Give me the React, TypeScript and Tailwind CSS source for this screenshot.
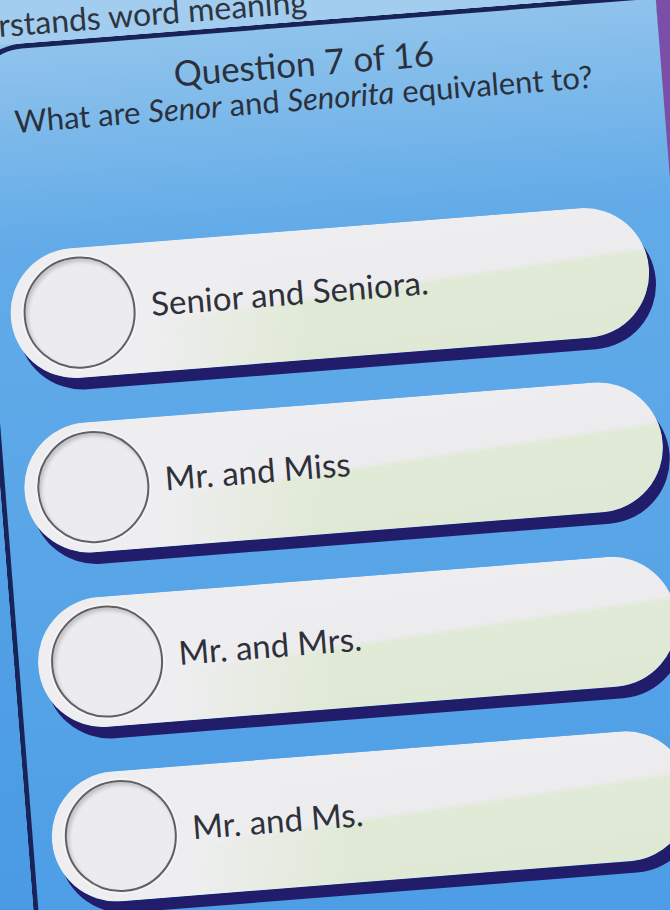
import React from 'react'

const options = ['Senior and Seniora.', 'Mr. and Miss', 'Mr. and Mrs.', 'Mr. and Ms.']

function OptionCard({ label }: { label: string }) {
  return (
    <div className="flex h-[130px] w-[640px] items-center gap-4 rounded-full pl-[13px] shadow-[6px_12px_0_#221d6b] bg-[linear-gradient(to_right,#eeeef0_130px,rgba(238,238,240,0)_300px),linear-gradient(176deg,#efeef1_0%,#ecebee_50%,#e1ead6_53%,#dfe8d4_100%)]">
      <div className="h-[112px] w-[112px] shrink-0 rounded-full border-2 border-[#606064] bg-[#ecebee] shadow-[inset_2px_3px_4px_rgba(0,0,0,0.18),0_0_0_2px_#f4f4f6]" />
      <span className="pb-2 text-[33px] leading-[40px] text-[#2e3139]">{label}</span>
    </div>
  )
}

export default function App() {
  return (
    <div
      className="relative h-[910px] w-[670px] overflow-hidden bg-[linear-gradient(to_bottom,#9ccbee,#5aa6e8_30%,#4a9be4)]"
      style={{ fontFamily: 'Lato, "Open Sans", sans-serif' }}
    >
      <div className="-ml-[40px] -mt-[22px] flex w-[800px] origin-top-left rotate-[-4.5deg] flex-col">
        {/* header strip */}
        <div className="flex h-[70px] items-end bg-[#a2cdef] pb-[3px]">
          <span className="-ml-[36px] whitespace-nowrap text-[32px] leading-[34px] text-[#2e3440]">
            understands word meaning
          </span>
        </div>

        <div className="flex">
          {/* quiz panel */}
          <div className="h-[940px] w-[692px] shrink-0 rounded-tl-[56px] border-l-[5px] border-t-[5px] border-[#1a2358] bg-[linear-gradient(to_bottom,#8fc3ec,#62abe8_200px,#4c9de6)]">
            <div className="w-[658px] pl-[4px] pt-[16px] text-center text-[#2b313c]">
              <p className="text-[35px] leading-[40px]">Question 7 of 16</p>
              <p className="-mt-[2px] pr-[6px] text-[31px] leading-[36px]">
                What are <i>Senor</i> and <i>Senorita</i> equivalent to?
              </p>
            </div>

            <div className="mt-[113px] flex flex-col gap-[45px] pl-[19px]">
              {options.map((o) => (
                <OptionCard key={o} label={o} />
              ))}
            </div>
          </div>
          <div className="h-[940px] w-[112px] bg-[#7b4ea8]" />
        </div>
      </div>
    </div>
  )
}
